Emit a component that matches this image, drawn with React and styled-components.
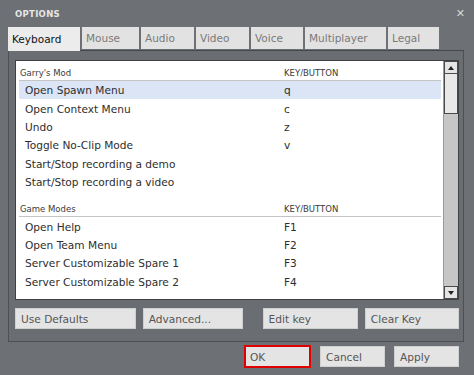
import React from 'react';
import styled, { createGlobalStyle } from 'styled-components';

const GlobalStyle = createGlobalStyle`
  body {
    margin: 0;
    background: #6d7074;
    font-family: 'DejaVu Sans', 'Liberation Sans', sans-serif;
  }
`;

const tabs = [
  ['Keyboard', 72],
  ['Mouse', 57],
  ['Audio', 53],
  ['Video', 53],
  ['Voice', 52],
  ['Multiplayer', 81],
  ['Legal', 51],
];

const sections = [
  {
    title: "Garry's Mod",
    rows: [
      ['Open Spawn Menu', 'q'],
      ['Open Context Menu', 'c'],
      ['Undo', 'z'],
      ['Toggle No-Clip Mode', 'v'],
      ['Start/Stop recording a demo', ''],
      ['Start/Stop recording a video', ''],
    ],
  },
  {
    title: 'Game Modes',
    rows: [
      ['Open Help', 'F1'],
      ['Open Team Menu', 'F2'],
      ['Server Customizable Spare 1', 'F3'],
      ['Server Customizable Spare 2', 'F4'],
    ],
  },
];

function App() {
  return (
    <Window>
      <GlobalStyle />
      <TitleBar>
        <Title>OPTIONS</Title>
        <Close>✕</Close>
      </TitleBar>
      <TabRow>
        {tabs.map(([t, w], i) => (
          <Tab key={t} width={w} active={i === 0}>
            {t}
          </Tab>
        ))}
      </TabRow>
      <Panel>
        <ListBox>
          <List>
            {sections.map((s, si) => (
              <Section key={s.title} first={si === 0}>
                <SectionHeader>
                  <span>{s.title}</span>
                  <span>KEY/BUTTON</span>
                </SectionHeader>
                {s.rows.map(([name, key], ri) => (
                  <Row key={name} selected={si === 0 && ri === 0}>
                    <Name>{name}</Name>
                    <Key>{key}</Key>
                  </Row>
                ))}
              </Section>
            ))}
          </List>
          <ScrollBar>
            <ScrollButton>
              <Arrow up />
            </ScrollButton>
            <Thumb />
            <Track />
            <ScrollButton>
              <Arrow />
            </ScrollButton>
          </ScrollBar>
        </ListBox>
        <ActionRow>
          <Button width={123}>Use Defaults</Button>
          <Button width={102}>Advanced...</Button>
          <Spacer />
          <Button width={97}>Edit key</Button>
          <Button width={96}>Clear Key</Button>
        </ActionRow>
      </Panel>
      <Footer>
        <Button width={67} focused>
          OK
        </Button>
        <Button width={65}>Cancel</Button>
        <Button width={65}>Apply</Button>
      </Footer>
    </Window>
  );
}

const Window = styled.div`
  width: 474px;
  height: 375px;
  box-sizing: border-box;
  background: #6d7074;
  overflow: hidden;
`;

const TitleBar = styled.div`
  height: 27px;
  display: flex;
  align-items: center;
  justify-content: space-between;
  padding: 0 9px 0 15px;
`;

const Title = styled.div`
  font-size: 8.5px;
  font-weight: bold;
  letter-spacing: 0.3px;
  color: #e6e6e6;
`;

const Close = styled.div`
  font-size: 11px;
  color: #d8d8d8;
`;

const TabRow = styled.div`
  display: flex;
  gap: 2px;
  margin-left: 8px;
  height: 23px;
`;

const Tab = styled.div`
  box-sizing: border-box;
  width: ${(p) => p.width}px;
  height: ${(p) => (p.active ? '24px' : '22px')};
  padding-left: 4px;
  display: flex;
  align-items: center;
  font-size: 10.5px;
  color: ${(p) => (p.active ? '#111' : '#7a7a7a')};
  background: ${(p) => (p.active ? '#ececec' : '#e2e2e2')};
  position: relative;
  z-index: ${(p) => (p.active ? 1 : 0)};
`;

const Panel = styled.div`
  box-sizing: border-box;
  margin: 0 10px 0 8px;
  height: 292px;
  border: 1px solid #4d5054;
  border-top-color: #45484c;
  padding: 9px 4px 0 6px;
  background: #6a6d71;
`;

const ListBox = styled.div`
  display: flex;
  height: 238px;
  border: 1px solid #3e4044;
  background: #fff;
`;

const List = styled.div`
  flex: 1;
  padding: 0 2px 0 3px;
  color: #2e2e2e;
`;

const Section = styled.div`
  margin-top: ${(p) => (p.first ? '0' : '6px')};
`;

const SectionHeader = styled.div`
  height: 20px;
  box-sizing: border-box;
  display: flex;
  align-items: flex-end;
  padding: 0 0 2px 1px;
  border-bottom: 1px solid #c4c4c4;
  font-size: 8.5px;
  color: #3a3a3a;
  span:first-child {
    width: 264px;
  }
`;

const Row = styled.div`
  height: 18.4px;
  display: flex;
  align-items: center;
  padding-left: 6px;
  font-size: 10.6px;
  background: ${(p) => (p.selected ? '#dbe5f5' : 'transparent')};
`;

const Name = styled.div`
  width: 259px;
`;

const Key = styled.div`
  font-size: 10.6px;
`;

const ScrollBar = styled.div`
  width: 14px;
  display: flex;
  flex-direction: column;
  background: #c6c6c6;
  border-left: 1px solid #9a9a9a;
`;

const ScrollButton = styled.div`
  height: 13px;
  box-sizing: border-box;
  border: 1px solid #4a4a4a;
  background: #e4e4e4;
  display: flex;
  align-items: center;
  justify-content: center;
`;

const Arrow = styled.div`
  width: 0;
  height: 0;
  border-left: 3px solid transparent;
  border-right: 3px solid transparent;
  ${(p) =>
    p.up ? 'border-bottom: 4px solid #222;' : 'border-top: 4px solid #222;'}
`;

const Thumb = styled.div`
  height: 40px;
  box-sizing: border-box;
  border: 1px solid #4a4a4a;
  border-top: none;
  background: #e8e8e8;
`;

const Track = styled.div`
  flex: 1;
`;

const ActionRow = styled.div`
  display: flex;
  gap: 7px;
  margin-top: 8px;
`;

const Spacer = styled.div`
  width: 6px;
`;

const Button = styled.div`
  box-sizing: border-box;
  width: ${(p) => p.width}px;
  height: ${(p) => (p.focused ? '23px' : '21px')};
  margin-top: ${(p) => (p.focused ? '-1px' : '0')};
  display: flex;
  align-items: center;
  padding-left: ${(p) => (p.focused ? '4px' : '5px')};
  font-size: 10.6px;
  color: #555;
  background: #e4e4e4;
  border: ${(p) => (p.focused ? '2px solid #e00000' : '1px solid #d0d0d0')};
`;

const Footer = styled.div`
  display: flex;
  justify-content: flex-end;
  gap: 9px;
  padding: 4px 15px 0 0;
`;

export default App;
